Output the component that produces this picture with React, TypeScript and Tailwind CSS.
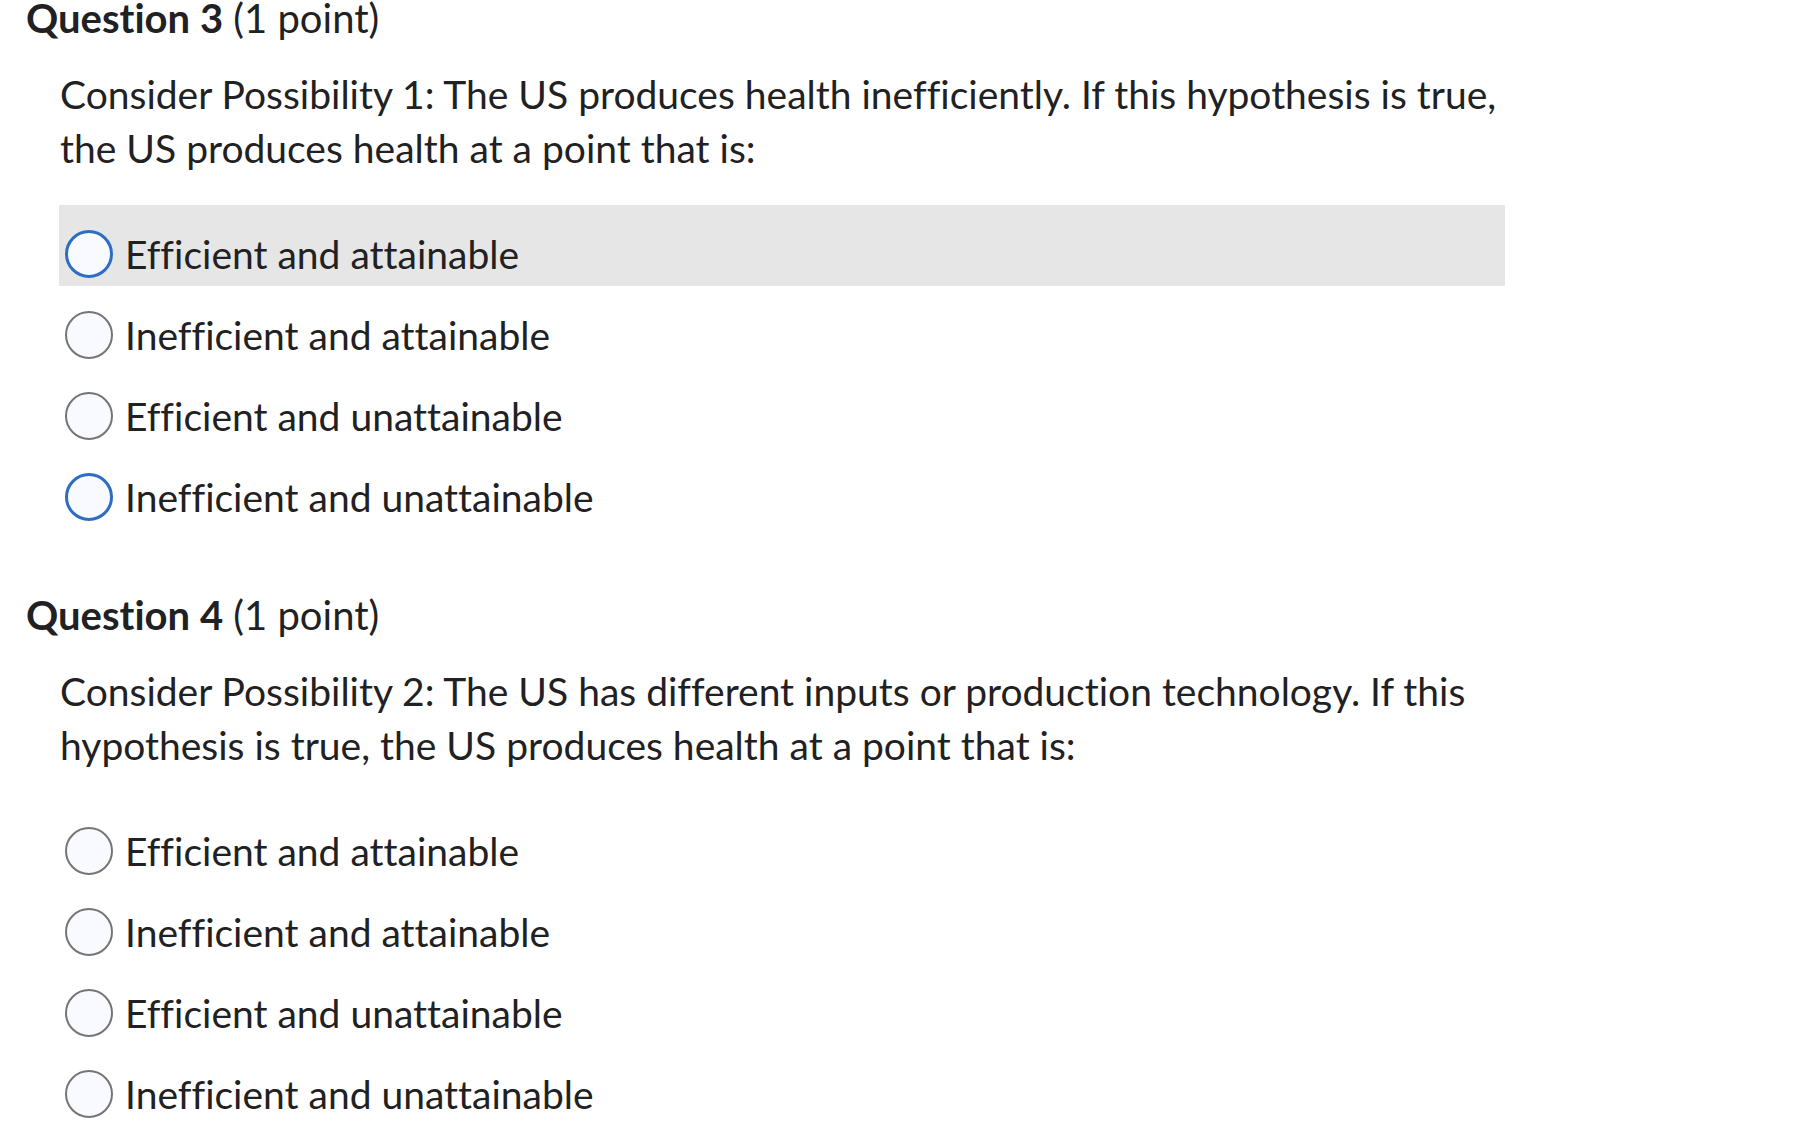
import React, { useState } from "react";

type Question = {
  id: number;
  prompt: string;
  options: string[];
};

const OPTIONS = [
  "Efficient and attainable",
  "Inefficient and attainable",
  "Efficient and unattainable",
  "Inefficient and unattainable",
];

const QUESTIONS: Question[] = [
  {
    id: 3,
    prompt:
      "Consider Possibility 1: The US produces health inefficiently. If this hypothesis is true, the US produces health at a point that is:",
    options: OPTIONS,
  },
  {
    id: 4,
    prompt:
      "Consider Possibility 2: The US has different inputs or production technology. If this hypothesis is true, the US produces health at a point that is:",
    options: OPTIONS,
  },
];

function Radio({ focused }: { focused: boolean }) {
  return (
    <span
      className={`block w-[48px] h-[48px] shrink-0 rounded-full bg-[#f8faff] ${
        focused ? "border-[3.5px] border-[#2d6ec2]" : "border-[2px] border-[#757575]"
      }`}
    />
  );
}

function QuestionBlock({
  q,
  hovered,
  focused,
}: {
  q: Question;
  hovered?: number;
  focused: number[];
}) {
  return (
    <div className="mb-[69px]">
      {/* Header */}
      <h2 className="text-[40px] leading-[34px] mt-[1px]">
        <span className="font-bold">Question {q.id}</span> (1 point)
      </h2>

      <p className="ml-[34px] mt-[32px] w-[1446px] text-[39px] leading-[54px]">{q.prompt}</p>

      <div className="ml-[33px] mt-[30px] w-[1446px]">
        {q.options.map((opt, i) => (
          <label
            key={opt}
            className={`h-[81px] flex items-end pb-[8px] pl-[6px] ${
              hovered === i ? "bg-[#e6e6e6]" : ""
            }`}
          >
            <span className="flex items-center gap-[12px]">
              <Radio focused={focused.includes(i)} />
              <span className="text-[39px] leading-[48px]">{opt}</span>
            </span>
          </label>
        ))}
      </div>
    </div>
  );
}

export default function App() {
  const [hover] = useState(0);

  return (
    <div className="min-h-screen bg-white text-[#1f2123] font-['Lato',sans-serif] [font-variant-ligatures:none]">
      <div className="pl-[26px]">
        <QuestionBlock q={QUESTIONS[0]} hovered={hover} focused={[0, 3]} />
        <QuestionBlock q={QUESTIONS[1]} focused={[]} />
      </div>
    </div>
  );
}
